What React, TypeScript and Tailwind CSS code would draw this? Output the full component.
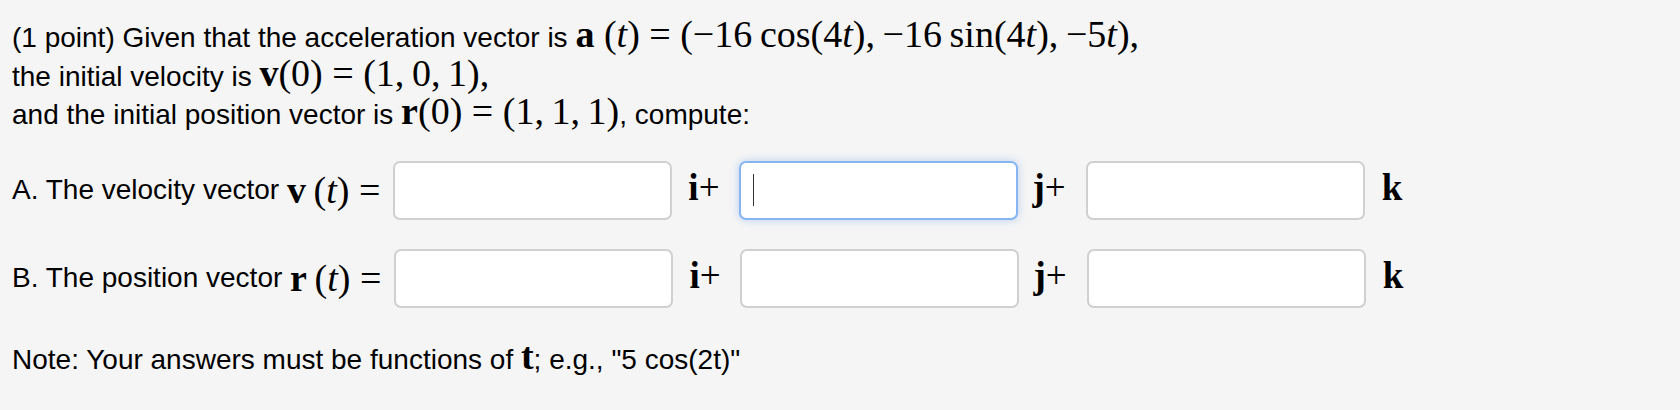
import React from "react";

const sans = "font-['Liberation_Sans',Arial,sans-serif]";
const serif = "font-['Liberation_Serif','Times_New_Roman',serif]";

function M({ children }: { children: React.ReactNode }) {
  return <span className={`${serif} text-[38px] leading-none`}>{children}</span>;
}

function Box({ focused = false }: { focused?: boolean }) {
  return (
    <div
      className={
        focused
          ? "w-[279px] h-[59px] shrink-0 rounded-[7px] border-2 border-[#86b6f2] bg-white shadow-[0_0_8px_rgba(110,160,235,0.45)] flex items-center pl-[12px]"
          : "w-[279px] h-[59px] shrink-0 rounded-[7px] border-2 border-[#d0d0d0] bg-white"
      }
    >
      {focused && <span className="w-px h-[32px] bg-[#333]" />}
    </div>
  );
}

function Unit({ v, plus = true }: { v: string; plus?: boolean }) {
  return (
    <span className={`${serif} text-[37px] leading-none`}>
      <b>{v}</b>
      {plus && "+"}
    </span>
  );
}

function Row({ label, vec, focus }: { label: string; vec: string; focus?: boolean }) {
  return (
    <div className="flex items-center h-[59px]">
      <span>{label}&nbsp;</span>
      <M>
        <b>{vec}</b>&thinsp;(<i>t</i>)&nbsp;=
      </M>
      <div className="ml-[13px]">
        <Box />
      </div>
      <div className="ml-[16px] mr-[19px]">
        <Unit v="i" />
      </div>
      <Box focused={focus} />
      <div className="ml-[15px] mr-[20px]">
        <Unit v="j" />
      </div>
      <Box />
      <div className="ml-[17px]">
        <Unit v="k" plus={false} />
      </div>
    </div>
  );
}

export default function App() {
  return (
    <div className={`w-[1680px] h-[410px] bg-[#f5f5f5] text-black ${sans} text-[28px] pl-[12px] pt-[15px]`}>
      <div className="h-[38.5px] leading-[38px] whitespace-nowrap">
        (1 point) Given that the acceleration vector is{" "}
        <M>
          <b>a</b>&nbsp;(<i>t</i>) = (−16&thinsp;cos(4<i>t</i>),&thinsp;−16&thinsp;sin(4<i>t</i>),&thinsp;−5<i>t</i>),
        </M>
      </div>
      <div className="h-[38.5px] leading-[38px] whitespace-nowrap">
        the initial velocity is{" "}
        <M>
          <b>v</b>(0) = (1,&thinsp;0,&thinsp;1),
        </M>
      </div>
      <div className="h-[38.5px] leading-[38px] whitespace-nowrap">
        and the initial position vector is{" "}
        <M>
          <b>r</b>(0) = (1,&thinsp;1,&thinsp;1)
        </M>
        , compute:
      </div>

      <div className="mt-[30px]">
        <Row label="A. The velocity vector" vec="v" focus />
      </div>
      <div className="mt-[29px]">
        <Row label="B. The position vector" vec="r" />
      </div>

      <div className="mt-[29px] h-[38px] leading-[38px] whitespace-nowrap">
        Note: Your answers must be functions of{" "}
        <span className={`${serif} text-[38px] leading-none font-bold`}>t</span>; e.g., "5 cos(2t)"
      </div>
    </div>
  );
}
